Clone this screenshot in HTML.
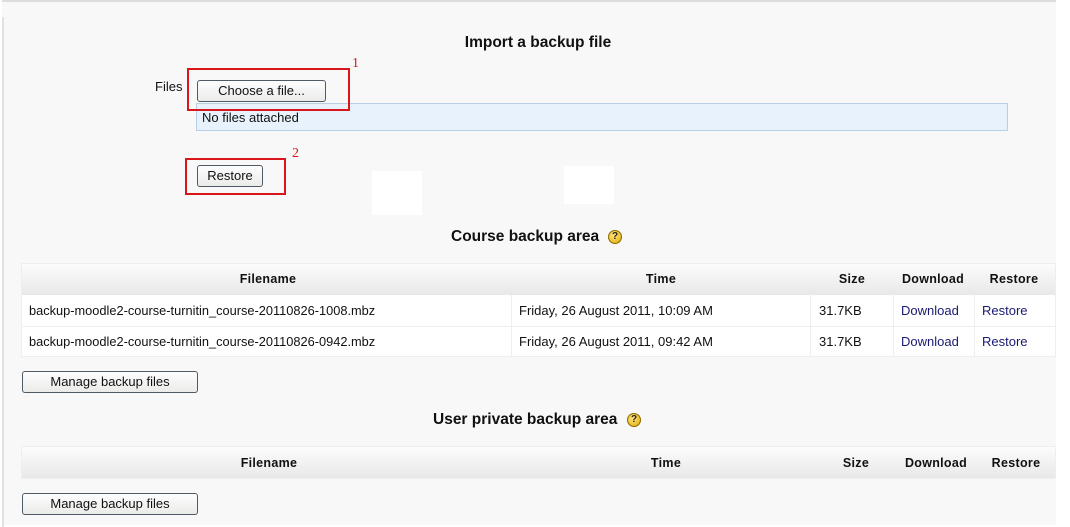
<!DOCTYPE html>
<html><head><meta charset="utf-8"><style>
*{margin:0;padding:0;box-sizing:border-box}
body{width:1070px;height:525px;background:#fff;position:relative;overflow:hidden;font-family:"Liberation Sans",Arial,sans-serif;font-size:13px;color:#111}
.a{position:absolute;white-space:nowrap}
.main{position:absolute;left:2px;top:0;width:1054px;height:525px;background:#f8f8f8;border-top:2px solid #ddd}
.lb{position:absolute;left:0;top:15px;width:2px;height:510px;background:#e2e2e2}
.h{position:absolute;font-weight:bold;font-size:15.5px;text-align:center}
.btn{position:absolute;border:1px solid #4e5a66;border-radius:3px;background:linear-gradient(#fdfdfd,#ebebea);text-align:center;font-size:13px;line-height:19px;color:#111}
.red{position:absolute;border:2px solid #d9161c}
.num{position:absolute;color:#d9161c;font-family:"Liberation Serif",serif;font-size:14px}
.tbl{position:absolute;left:21px;width:1035px;border:1px solid #eee;background:#fff}
.hd{position:absolute;left:0;width:100%;height:31px;background:linear-gradient(#fcfcfc,#e8e8e8)}
.th{position:absolute;font-weight:bold;font-size:12.5px;transform:translateX(-50%);letter-spacing:0.3px}
.td{position:absolute;font-size:13px;white-space:nowrap}
.f{font-size:12.8px}
.lk{color:#1a1a72}
.vl{position:absolute;width:1px;background:#eee}
.hl{position:absolute;left:0;width:100%;height:1px;background:#eee}
.help{position:absolute;width:14px;height:14px;border-radius:50%;background:radial-gradient(circle at 40% 35%,#ffe680,#e0a800);border:1px solid #8a6a00;font-size:10px;font-weight:bold;text-align:center;line-height:12px;color:#222}
</style></head><body>
<div class="main">
<div class="lb"></div>
</div>
<div class="h" style="top:34px;left:0;width:1076px">Import a backup file</div>
<div class="a" style="left:155px;top:79px;font-size:13px">Files</div>
<div class="a" style="left:196px;top:103px;width:812px;height:28px;background:#e8f2fc;border:1px solid #b8cfe4;padding:6px 0 0 5px">No files attached</div>
<div class="btn" style="left:197px;top:80px;width:129px;height:22px">Choose a file...</div>
<div class="red" style="left:187px;top:68px;width:163px;height:43px"></div>
<div class="num" style="left:352px;top:56px">1</div>
<div class="btn" style="left:197px;top:165px;width:66px;height:22px">Restore</div>
<div class="red" style="left:185px;top:158px;width:101px;height:37px"></div>
<div class="num" style="left:292px;top:146px">2</div>
<div class="a" style="left:372px;top:171px;width:50px;height:44px;background:#fff"></div>
<div class="a" style="left:564px;top:166px;width:50px;height:38px;background:#fff"></div>

<div class="a h" style="left:451px;top:228px">Course backup area</div>
<div class="help" style="left:608px;top:230px">?</div>

<div class="tbl" style="top:263px;height:94px">
  <div class="hd" style="top:0"></div>
  <div class="th" style="left:246px;top:8px">Filename</div>
  <div class="th" style="left:639px;top:8px">Time</div>
  <div class="th" style="left:830px;top:8px">Size</div>
  <div class="th" style="left:911px;top:8px">Download</div>
  <div class="th" style="left:992px;top:8px">Restore</div>
  <div class="hl" style="top:62px"></div>
  <div class="vl" style="left:489px;top:31px;height:62px"></div>
  <div class="vl" style="left:788px;top:31px;height:62px"></div>
  <div class="vl" style="left:871px;top:31px;height:62px"></div>
  <div class="vl" style="left:952px;top:31px;height:62px"></div>
  <div class="td f" style="left:7px;top:39px">backup-moodle2-course-turnitin_course-20110826-1008.mbz</div>
  <div class="td" style="left:497px;top:39px">Friday, 26 August 2011, 10:09 AM</div>
  <div class="td" style="left:797px;top:39px">31.7KB</div>
  <div class="td lk" style="left:879px;top:39px">Download</div>
  <div class="td lk" style="left:960px;top:39px">Restore</div>
  <div class="td f" style="left:7px;top:70px">backup-moodle2-course-turnitin_course-20110826-0942.mbz</div>
  <div class="td" style="left:497px;top:70px">Friday, 26 August 2011, 09:42 AM</div>
  <div class="td" style="left:797px;top:70px">31.7KB</div>
  <div class="td lk" style="left:879px;top:70px">Download</div>
  <div class="td lk" style="left:960px;top:70px">Restore</div>
</div>
<div class="btn" style="left:22px;top:371px;width:176px;height:22px">Manage backup files</div>

<div class="a h" style="left:433px;top:411px">User private backup area</div>
<div class="help" style="left:627px;top:413px">?</div>
<div class="tbl" style="top:446px;height:33px">
  <div class="hd" style="top:0"></div>
  <div class="th" style="left:247px;top:9px">Filename</div>
  <div class="th" style="left:644px;top:9px">Time</div>
  <div class="th" style="left:834px;top:9px">Size</div>
  <div class="th" style="left:914px;top:9px">Download</div>
  <div class="th" style="left:994px;top:9px">Restore</div>
</div>
<div class="btn" style="left:22px;top:493px;width:176px;height:22px">Manage backup files</div>
</body></html>
